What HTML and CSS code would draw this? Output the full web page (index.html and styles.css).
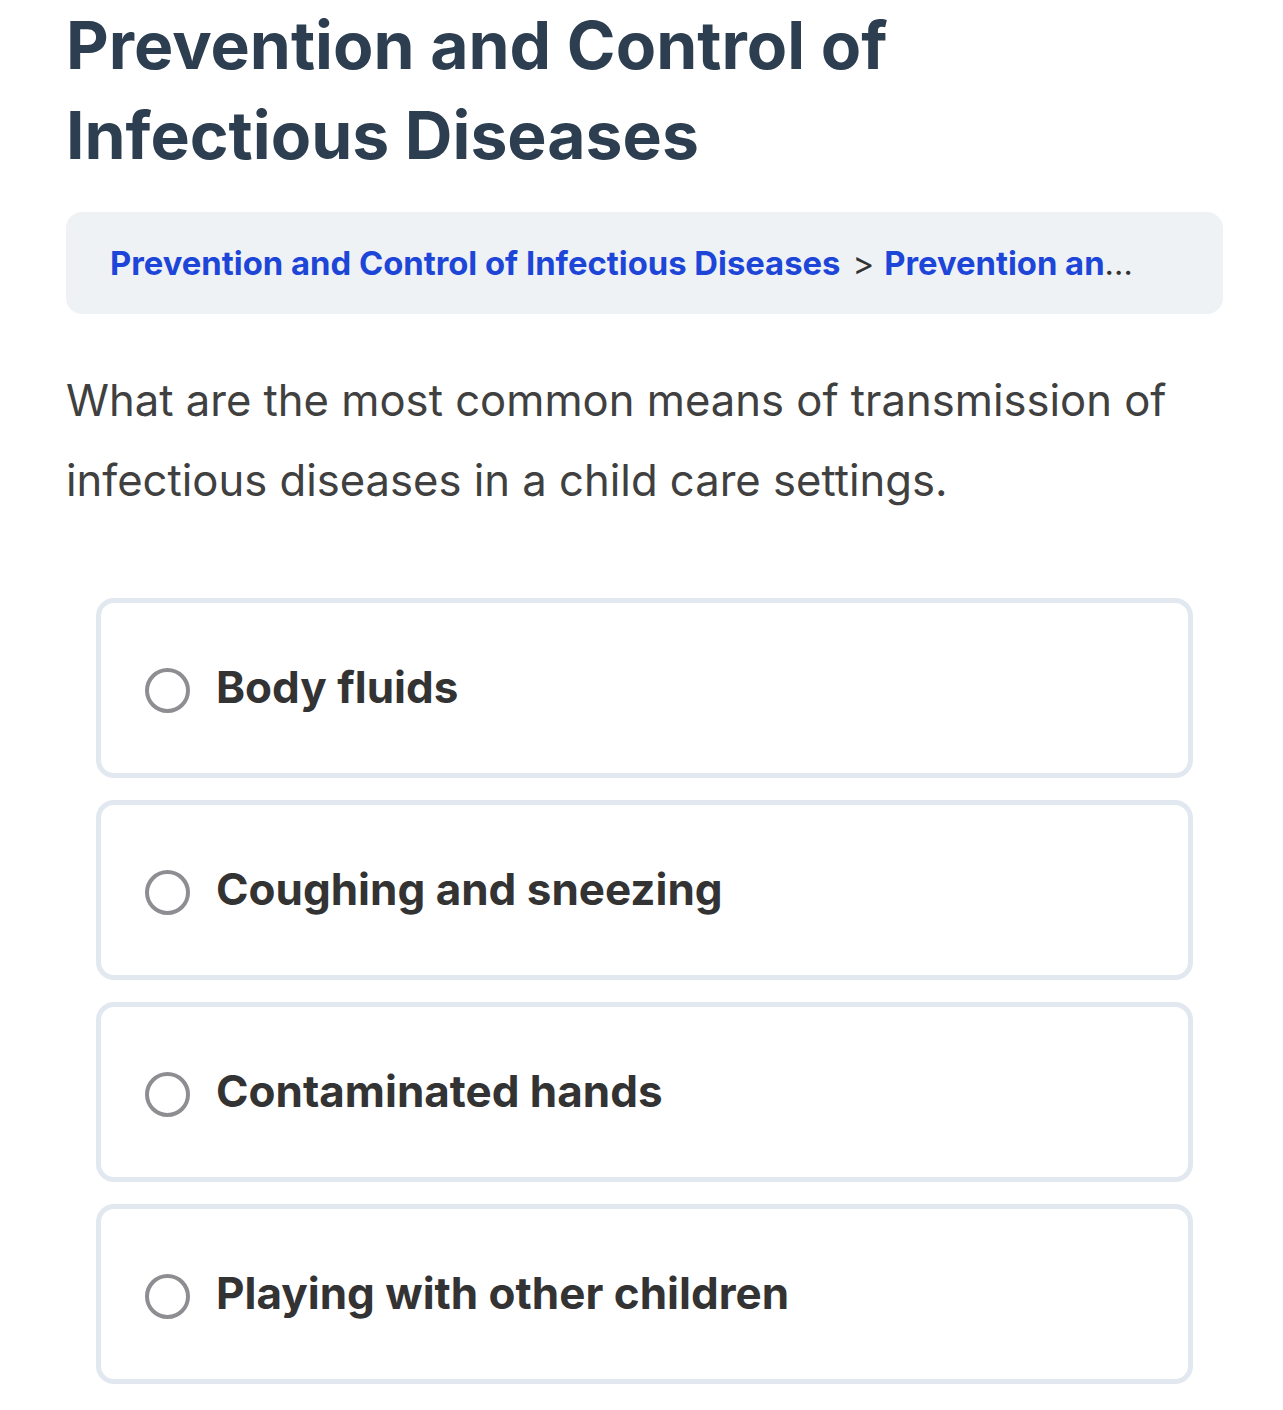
FILE: index.html
```html
<!DOCTYPE html>
<html lang="en">
<head>
    <meta charset="UTF-8">
    <meta name="viewport" content="width=device-width, initial-scale=1.0">
    <title>Prevention and Control of Infectious Diseases</title>
    <link rel="stylesheet" href="styles.css">
</head>
<body>
    <div class="container">
        <h1>Prevention and Control of Infectious Diseases</h1>

        <nav class="breadcrumb">
            <a href="#" class="crumb">Prevention and Control of Infectious Diseases</a>
            <span class="sep">&gt;</span>
            <span class="crumb-current"><a href="#" class="crumb">Prevention and Control of Infectious Diseases</a></span>
        </nav>

        <p class="question">What are the most common means of transmission of infectious diseases in a child care settings.</p>

        <div class="options">
            <label class="option">
                <input type="radio" name="answer">
                <span class="option-text">Body fluids</span>
            </label>
            <label class="option">
                <input type="radio" name="answer">
                <span class="option-text">Coughing and sneezing</span>
            </label>
            <label class="option">
                <input type="radio" name="answer">
                <span class="option-text">Contaminated hands</span>
            </label>
            <label class="option">
                <input type="radio" name="answer">
                <span class="option-text">Playing with other children</span>
            </label>
        </div>
    </div>
</body>
</html>
```

FILE: styles.css
```css
* {
    margin: 0;
    padding: 0;
    box-sizing: border-box;
}

body {
    font-family: Inter, "Noto Sans", sans-serif;
    background-color: white;
}

.container {
    padding: 0 60px 0 66px;
}

h1 {
    max-width: 920px;
    font-size: 66px;
    line-height: 90px;
    font-weight: 700;
    color: #2c3e50;
}

.breadcrumb {
    margin-top: 32px;
    background-color: #eff2f5;
    border-radius: 16px;
    padding: 32px 44px;
    display: flex;
    align-items: center;
    font-size: 32.8px;
    line-height: 38px;
    white-space: nowrap;
}

.crumb {
    color: #1d46d8;
    font-weight: 700;
    text-decoration: none;
}

.sep {
    color: #333;
    margin: 0 10px 0 12px;
}

.crumb-current {
    display: block;
    max-width: 256px;
    overflow: hidden;
    text-overflow: ellipsis;
    color: #333;
}

.question {
    margin-top: 47px;
    font-size: 43.6px;
    line-height: 80px;
    color: #404040;
}

.options {
    margin: 77px 30px 0;
    display: flex;
    flex-direction: column;
    gap: 22px;
}

.option {
    height: 180px;
    border: 5px solid #e2e8f0;
    border-radius: 18px;
    padding: 0 44px;
    display: flex;
    align-items: center;
    gap: 26px;
    cursor: pointer;
}

.option input {
    appearance: none;
    width: 45px;
    height: 45px;
    border: 4px solid #8e8e92;
    border-radius: 50%;
    flex-shrink: 0;
    margin-top: 4px;
}

.option-text {
    font-size: 44px;
    font-weight: 700;
    color: #333;
    margin-bottom: 3px;
}
```
